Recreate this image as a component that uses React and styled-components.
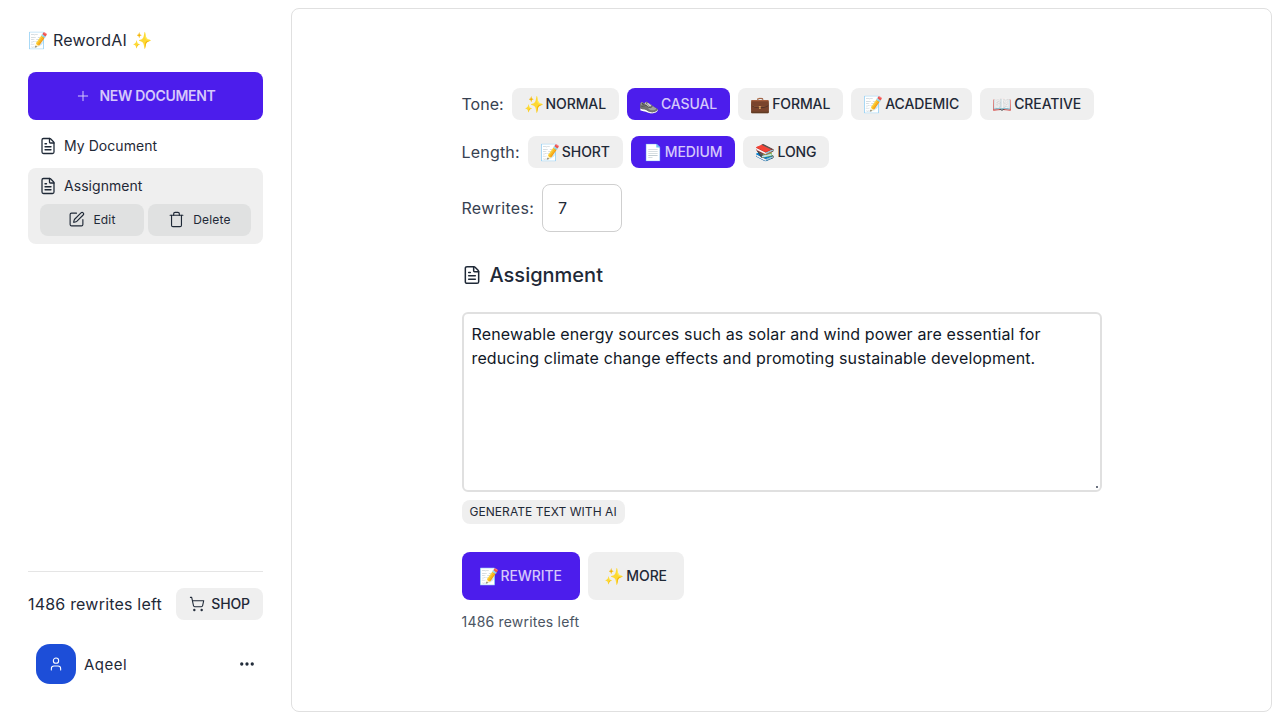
import React from 'react';
import styled, { createGlobalStyle } from 'styled-components';
import { FileText, SquarePen, Trash, ShoppingCart, Plus, Ellipsis, User } from 'lucide-react';

const tones = [
  { emoji: '✨', label: 'NORMAL' },
  { emoji: '👟', label: 'CASUAL', active: true, muted: true },
  { emoji: '💼', label: 'FORMAL' },
  { emoji: '📝', label: 'ACADEMIC' },
  { emoji: '📖', label: 'CREATIVE' },
];

const lengths = [
  { emoji: '📝', label: 'SHORT' },
  { emoji: '📄', label: 'MEDIUM', active: true },
  { emoji: '📚', label: 'LONG' },
];

const GlobalStyle = createGlobalStyle`
  html, body {
    margin: 0;
    padding: 0;
    background: #fff;
  }
  body {
    font-family: Inter, "Noto Sans", sans-serif;
    letter-spacing: 0.2px;
    color: #1f2937;
  }
  * {
    box-sizing: border-box;
  }
`;

const Page = styled.div`
  display: flex;
  height: 720px;
  overflow: hidden;
`;

const Sidebar = styled.aside`
  width: 291px;
  flex: none;
  display: flex;
  flex-direction: column;
  padding: 28px 28px 36px;
`;

const Logo = styled.div`
  display: flex;
  align-items: center;
  gap: 6px;
  padding-left: 1px;
  font-size: 16px;
  line-height: 24px;
  color: #1f2937;
  margin-bottom: 20px;
`;

const Emoji = styled.span`
  display: inline-flex;
  justify-content: center;
  width: 18px;
  font-size: 16px;
  line-height: 1;
  letter-spacing: 0;
  filter: ${(p) => (p.$muted ? 'grayscale(1) brightness(1.15)' : 'none')};
`;

const Button = styled.button`
  display: inline-flex;
  align-items: center;
  justify-content: center;
  border: 0;
  font-family: inherit;
  letter-spacing: -0.1px;
  font-weight: 500;
  font-size: 14px;
  height: ${(p) => p.$height || 32}px;
  padding: 0 ${(p) => p.$pad ?? 13}px 1px;
  border-radius: 8px;
  gap: ${(p) => p.$gap ?? 3}px;
  background: ${(p) => (p.$active ? '#4c1dec' : '#efefef')};
  color: ${(p) => (p.$active ? '#d5c8fb' : '#1f2937')};
`;

const NewButton = styled(Button)`
  width: 100%;
  font-weight: 600;
  letter-spacing: -0.3px;
  gap: 8px;
`;

const DocRow = styled.div`
  display: flex;
  align-items: center;
  gap: 7px;
  height: 36px;
  padding: 0 11px 1px;
  font-size: 14px;
  letter-spacing: 0.05px;
  color: #1f2937;
`;

const DocList = styled.div`
  margin-top: 8px;
  display: flex;
  flex-direction: column;
  gap: 4px;
`;

const DocActive = styled.div`
  background: #efefef;
  border-radius: 8px;
  padding-bottom: 8px;
`;

const DocActions = styled.div`
  display: grid;
  grid-template-columns: 104px 103px;
  gap: 4px;
  padding: 0 12px;
`;

const SmallAction = styled.button`
  display: flex;
  align-items: center;
  justify-content: center;
  gap: 8px;
  height: 32px;
  padding: 0 0 1px;
  border: 0;
  border-radius: 8px;
  background: #e0e1e1;
  font-family: inherit;
  letter-spacing: 0.2px;
  font-size: 12px;
  color: #1f2937;
`;

const SidebarBottom = styled.div`
  margin-top: auto;
  border-top: 1px solid #e5e5e5;
  padding-top: 16px;
`;

const CreditsRow = styled.div`
  display: flex;
  align-items: center;
  justify-content: space-between;
  font-size: 16px;
`;

const UserRow = styled.div`
  display: flex;
  align-items: center;
  margin-top: 24px;
  padding: 0 8px;
  gap: 8px;
  font-size: 15px;
  letter-spacing: 0.5px;
`;

const Avatar = styled.div`
  width: 40px;
  height: 40px;
  border-radius: 14px;
  background: #1d4ed8;
  color: #fff;
  display: flex;
  align-items: center;
  justify-content: center;
`;

const MoreIcon = styled(Ellipsis)`
  margin-left: auto;
  margin-right: -1px;
`;

const Main = styled.main`
  flex: 1;
  margin: 8px 8px 8px 0;
  border: 1px solid #e0e0e0;
  border-radius: 8px;
  display: flex;
  justify-content: center;
`;

const Content = styled.div`
  width: 640px;
  padding-top: 79px;
`;

const OptionRow = styled.div`
  display: flex;
  align-items: center;
  gap: 8px;
  margin-bottom: 16px;
  font-size: 16px;
`;

const Label = styled.span`
  color: #374151;
  letter-spacing: ${(p) => p.$spacing ?? 0.2}px;
`;

const NumberBox = styled.input`
  width: 80px;
  height: 48px;
  border: 1px solid #cfcfcf;
  border-radius: 8px;
  padding: 0 15px;
  font-family: inherit;
  font-size: 16px;
  color: #1f2937;
  outline: none;
`;

const Title = styled.h2`
  display: flex;
  align-items: center;
  gap: 8px;
  margin: 29px 0 23px;
  font-size: 20px;
  line-height: 28px;
  font-weight: 500;
  letter-spacing: 0;
  color: #1f2937;
`;

const TextWrap = styled.div`
  position: relative;
  &::after {
    content: '';
    position: absolute;
    right: 4px;
    bottom: 4px;
    width: 2px;
    height: 2px;
    background: #6b7280;
  }
`;

const TextBox = styled.textarea`
  display: block;
  width: 640px;
  height: 180px;
  border: 2px solid #e0e0e0;
  border-radius: 6px;
  padding: 8px;
  font-family: inherit;
  font-size: 16px;
  letter-spacing: 0.13px;
  line-height: 24px;
  color: #111827;
  outline: none;
  resize: none;
`;

const Generate = styled.button`
  display: block;
  margin-top: 8px;
  height: 24px;
  padding: 0 8px 1px;
  border: 0;
  border-radius: 8px;
  background: #efefef;
  font-family: inherit;
  font-size: 12px;
  font-weight: 400;
  letter-spacing: 0.05px;
  color: #1f2937;
`;

const ActionRow = styled.div`
  display: flex;
  gap: 8px;
  margin-top: 28px;
`;

const Hint = styled.div`
  margin-top: 12px;
  font-size: 14px;
  line-height: 20px;
  color: #4b5563;
`;

export default function App() {
  return (
    <Page>
      <GlobalStyle />
      <Sidebar>
        <Logo>
          <Emoji>📝</Emoji>
          <span>RewordAI</span>
          <Emoji>✨</Emoji>
        </Logo>
        <NewButton $active $height={48}>
          <Plus size={16} strokeWidth={1.5} /> NEW DOCUMENT
        </NewButton>
        <DocList>
          <DocRow>
            <FileText size={18} strokeWidth={1.7} /> My Document
          </DocRow>
          <DocActive>
            <DocRow>
              <FileText size={18} strokeWidth={1.7} /> Assignment
            </DocRow>
            <DocActions>
              <SmallAction>
                <SquarePen size={17} strokeWidth={1.6} /> Edit
              </SmallAction>
              <SmallAction>
                <Trash size={17} strokeWidth={1.6} /> Delete
              </SmallAction>
            </DocActions>
          </DocActive>
        </DocList>
        <SidebarBottom>
          <CreditsRow>
            1486 rewrites left
            <Button $gap={6}>
              <ShoppingCart size={16} strokeWidth={1.6} /> SHOP
            </Button>
          </CreditsRow>
          <UserRow>
            <Avatar>
              <User size={16} strokeWidth={1.6} />
            </Avatar>
            Aqeel
            <MoreIcon size={18} strokeWidth={2.4} />
          </UserRow>
        </SidebarBottom>
      </Sidebar>
      <Main>
        <Content>
          <OptionRow>
            <Label $spacing={0}>Tone:</Label>
            {tones.map((t) => (
              <Button key={t.label} $active={t.active}>
                <Emoji $muted={t.muted}>{t.emoji}</Emoji> {t.label}
              </Button>
            ))}
          </OptionRow>
          <OptionRow>
            <Label>Length:</Label>
            {lengths.map((t) => (
              <Button key={t.label} $active={t.active}>
                <Emoji>{t.emoji}</Emoji> {t.label}
              </Button>
            ))}
          </OptionRow>
          <OptionRow>
            <Label $spacing={0.31}>Rewrites:</Label>
            <NumberBox type="number" defaultValue={7} />
          </OptionRow>
          <Title>
            <FileText size={20} strokeWidth={1.8} /> Assignment
          </Title>
          <TextWrap>
            <TextBox defaultValue="Renewable energy sources such as solar and wind power are essential for reducing climate change effects and promoting sustainable development." />
          </TextWrap>
          <Generate>GENERATE TEXT WITH AI</Generate>
          <ActionRow>
            <Button $active $height={48} $pad={18}>
              <Emoji>📝</Emoji> REWRITE
            </Button>
            <Button $height={48} $pad={17.5}>
              <Emoji>✨</Emoji> MORE
            </Button>
          </ActionRow>
          <Hint>1486 rewrites left</Hint>
        </Content>
      </Main>
    </Page>
  );
}
